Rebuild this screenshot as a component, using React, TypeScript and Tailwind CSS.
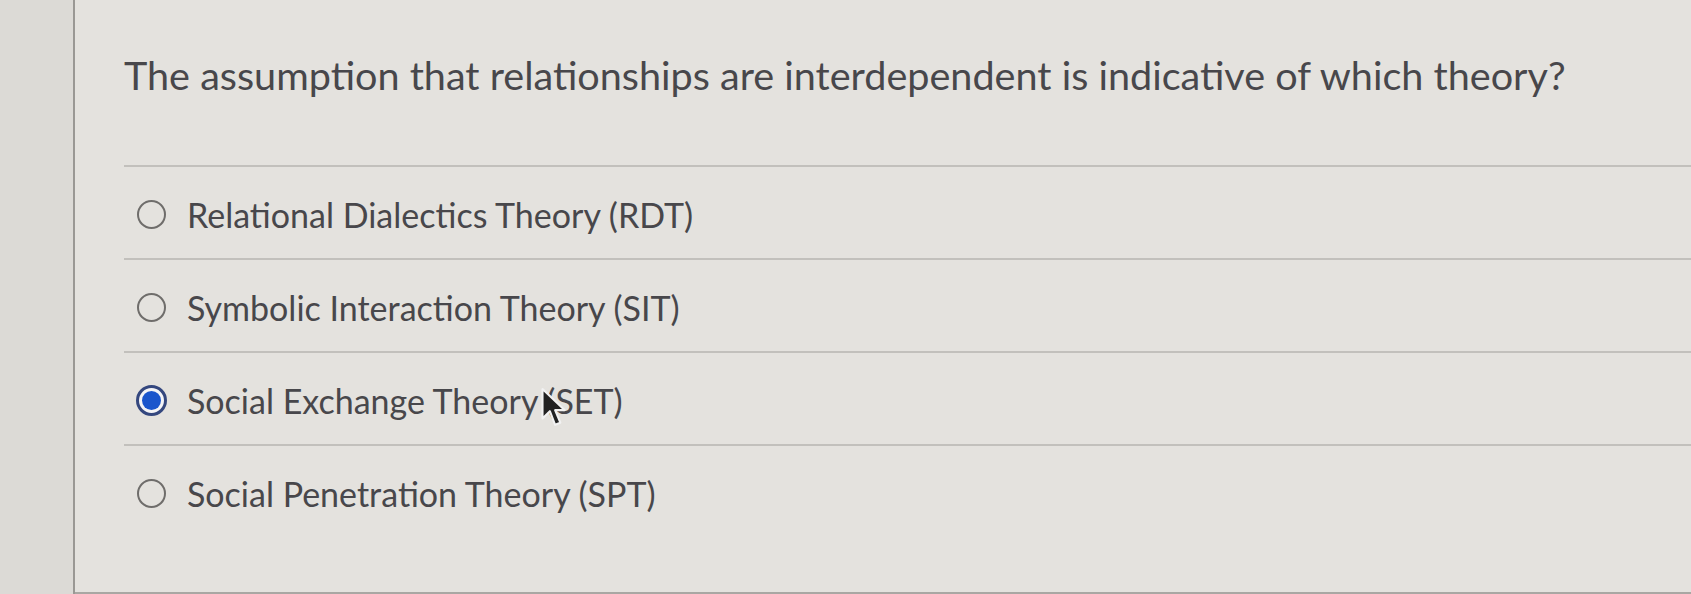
import { useState } from "react"

const options = [
  "Relational Dialectics Theory (RDT)",
  "Symbolic Interaction Theory (SIT)",
  "Social Exchange Theory (SET)",
  "Social Penetration Theory (SPT)",
]

function Radio({ checked }: { checked: boolean }) {
  if (checked) {
    return (
      <span className="flex h-[31px] w-[31px] shrink-0 items-center justify-center rounded-full border-[3px] border-[#34477e] bg-[#f4f4f6]">
        <span className="h-[19px] w-[19px] rounded-full bg-[#1a55cc]" />
      </span>
    )
  }
  return <span className="h-[29px] w-[29px] shrink-0 rounded-full border-2 border-[#6f6d6b] bg-transparent" />
}

function Cursor() {
  return (
    <svg className="absolute left-[540px] top-[387px]" width="26" height="42" viewBox="0 0 24 40">
      <path d="M2 2 L2 30 L9 23 L14 36 L19 34 L14 22 L23 22 Z" fill="#222" stroke="#f2f2f2" strokeWidth="2" strokeLinejoin="round" />
    </svg>
  )
}

export default function App() {
  const [picked, setPicked] = useState(2)

  return (
    <div className="relative flex h-[594px] w-[1691px] overflow-hidden bg-[#e4e2de] font-['Lato','Liberation_Sans',sans-serif] text-[#48474b]">
      <div className="w-[75px] shrink-0 border-r-2 border-[#9a9894] bg-[#dcdad6]" />

      <div className="flex flex-1 flex-col border-b-2 border-[#a9a7a3] pl-[49px]">
        <h1 className="mt-[51px] whitespace-nowrap text-[39.6px] leading-[48px] font-normal">
          The assumption that relationships are interdependent is indicative of which theory?
        </h1>

        <div className="mt-[66px] flex flex-col">
          {options.map((opt, i) => (
            <label
              key={opt}
              onClick={() => setPicked(i)}
              className="flex h-[93px] cursor-pointer items-center gap-[20px] border-t-2 border-[#c2c0bc] pl-[12px] pt-[4px]"
            >
              <span className="flex w-[31px] justify-center">
                <Radio checked={picked === i} />
              </span>
              <span className="text-[34px] leading-none">{opt}</span>
            </label>
          ))}
        </div>
      </div>

      <Cursor />
    </div>
  )
}
